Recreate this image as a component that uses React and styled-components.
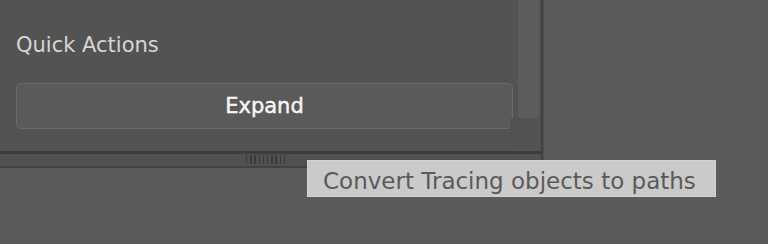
import React from 'react';
import styled, { createGlobalStyle } from 'styled-components';

const GlobalStyle = createGlobalStyle`
  html, body {
    margin: 0;
    padding: 0;
    background: #5b5b5b;
    font-family: "DejaVu Sans", "Liberation Sans", sans-serif;
  }
  #root {
    width: 768px;
    height: 244px;
    overflow: hidden;
  }
`;

const Stage = styled.div`
  position: relative;
  width: 768px;
  height: 244px;
  background: #5b5b5b;
`;

const Window = styled.div`
  display: flex;
  flex-direction: column;
  width: 541px;
  border-right: 1px solid #3b3b3b;
  box-shadow: 2px 0 0 #4a4a4a;
`;

const Panel = styled.section`
  position: relative;
  display: flex;
  height: 151px;
  background: #535353;
  border-bottom: 3px solid #3d3d3d;
`;

const Content = styled.div`
  flex: 1;
  display: flex;
  flex-direction: column;
  padding: 33px 2px 0 16px;
`;

const Heading = styled.h3`
  margin: 0;
  font-size: 21px;
  font-weight: 400;
  line-height: 24px;
  color: #d6d6d6;
`;

const ActionButton = styled.button`
  margin-top: 26px;
  height: 46px;
  border: 1.5px solid #6a6a6a;
  border-radius: 5px;
  background: #5a5a5a;
  color: #f6f6f6;
  font-family: "DejaVu Sans", "Liberation Sans", sans-serif;
  font-weight: 400;
  font-size: 21px;
  -webkit-text-stroke: 0.45px #f6f6f6;
  padding: 0;
  cursor: pointer;
`;

const ScrollTrack = styled.div`
  width: 26px;
  padding-left: 3px;
  box-sizing: border-box;
`;

const Thumb = styled.div`
  width: 21px;
  height: 118px;
  background: #5d5d5d;
  border-radius: 0 0 4px 4px;
`;

const Corner = styled.div`
  position: absolute;
  left: 510px;
  top: 118px;
  width: 31px;
  height: 33px;
  background: #525252;
`;

const GripBar = styled.div`
  display: flex;
  align-items: flex-start;
  height: 14px;
  padding: 1px 0 0 246px;
  box-sizing: border-box;
  background: #515151;
  border-bottom: 2px solid #424242;
`;

const Grip = styled.div`
  width: 42px;
  height: 9px;
  background: repeating-linear-gradient(
    90deg,
    #3a3a3a 0,
    #3a3a3a 1.4px,
    transparent 1.4px,
    transparent 4.2px
  );
`;

const Tooltip = styled.div`
  position: absolute;
  left: 307px;
  top: 160px;
  width: 409px;
  height: 37px;
  box-sizing: border-box;
  padding: 4px 0 0 15px;
  background: #cacaca;
  border: 1px solid #d2d2d2;
  color: #5a5a5a;
  font-size: 23px;
  line-height: 32px;
  white-space: nowrap;
`;

export default function App() {
  return (
    <Stage>
      <GlobalStyle />
      <Window>
        <Panel>
          <Content>
            <Heading>Quick Actions</Heading>
            <ActionButton>Expand</ActionButton>
          </Content>
          <ScrollTrack>
            <Thumb />
          </ScrollTrack>
          <Corner />
        </Panel>
        <GripBar>
          <Grip />
        </GripBar>
      </Window>
      <Tooltip>Convert Tracing objects to paths</Tooltip>
    </Stage>
  );
}
